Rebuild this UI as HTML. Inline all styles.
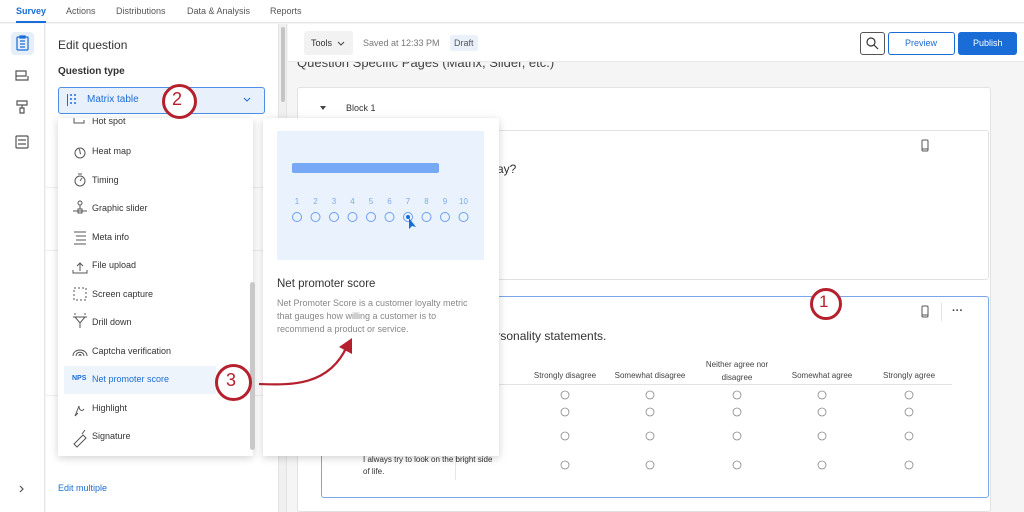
<!DOCTYPE html>
<html><head><meta charset="utf-8"><style>
*{margin:0;padding:0;box-sizing:border-box}
body{width:1024px;height:512px;overflow:hidden;background:#f5f5f5;font-family:"Liberation Sans",sans-serif;position:relative;color:#333}
.a{position:absolute}
.t{position:absolute;white-space:nowrap}
</style></head><body>
<div class="a" style="left:0;top:0;width:1024px;height:23px;background:#fff;border-bottom:1px solid #e6e6e6"></div>
<div class="t" style="left:16px;top:6px;font-size:9px;color:#1a6dd6;font-weight:bold">Survey</div>
<div class="a" style="left:16px;top:21px;width:30px;height:2px;background:#1a6dd6"></div>
<div class="t" style="left:66px;top:6px;font-size:9px;color:#555">Actions</div>
<div class="t" style="left:116px;top:6px;font-size:9px;color:#555">Distributions</div>
<div class="t" style="left:187px;top:6px;font-size:9px;color:#555">Data &amp; Analysis</div>
<div class="t" style="left:270px;top:6px;font-size:9px;color:#555">Reports</div>
<div class="a" style="left:0;top:24px;width:45px;height:488px;background:#fff;border-right:1px solid #e6e6e6"></div>
<div class="a" style="left:11px;top:32px;width:23px;height:23px;background:#e6eef9;border-radius:4px"></div>
<svg class="a" style="left:0;top:24px" width="45" height="488" fill="none" stroke="#555" stroke-width="1.2">
<rect x="17" y="13" width="11" height="13" rx="1" stroke="#1a6dd6"/><path d="M20 12h5v2h-5z M20 17h5 M20 20h5 M20 23h5" stroke="#1a6dd6"/>
<path d="M16 47h10v5h-10z M16 52v4h12v-4"/>
<path d="M17 77h10v4h-10z M22 81v3 M20 84h4v5h-4z"/>
<rect x="16" y="112" width="12" height="12" rx="1"/><path d="M18 116h8 M18 120h8"/>
<path d="M20 462l3 3-3 3"/>
</svg>
<div class="a" style="left:46px;top:24px;width:232px;height:488px;background:#fff"></div>
<div class="a" style="left:278px;top:24px;width:9px;height:488px;background:#f0f0f0;border-left:1px solid #e3e3e3;border-right:1px solid #e3e3e3"></div>
<div class="a" style="left:281px;top:27px;width:4px;height:75px;background:#c4c4c4;border-radius:2px"></div>
<div class="t" style="left:58px;top:38px;font-size:12px;color:#333">Edit question</div>
<div class="t" style="left:58px;top:66px;font-size:10px;font-weight:bold;color:#333">Question type</div>
<div class="a" style="left:58px;top:87px;width:207px;height:27px;background:#e8f0fb;border:1px solid #4d8fe6;border-radius:3px"></div>
<svg class="a" style="left:66px;top:93px" width="14" height="14" fill="#1a6dd6"><rect x="1" y="1" width="1" height="12"/><circle cx="5" cy="2" r="1"/><circle cx="5" cy="6" r="1"/><circle cx="5" cy="10" r="1"/><circle cx="9" cy="2" r="1"/><circle cx="9" cy="6" r="1"/><circle cx="9" cy="10" r="1"/></svg>
<div class="t" style="left:87px;top:94px;font-size:10px;color:#1a6dd6">Matrix table</div>
<svg class="a" style="left:243px;top:97px" width="8" height="6" fill="none" stroke="#1a6dd6"><path d="M1 1l3 3 3-3"/></svg>
<div class="a" style="left:46px;top:187px;width:232px;height:1px;background:#eee"></div>
<div class="a" style="left:46px;top:250px;width:232px;height:1px;background:#eee"></div>
<div class="a" style="left:46px;top:395px;width:232px;height:1px;background:#eee"></div>
<div class="t" style="left:58px;top:483px;font-size:9px;color:#1a6dd6">Edit multiple</div>
<div class="t" style="left:297px;top:55px;font-size:13px;color:#444">Question Specific Pages (Matrix, Slider, etc.)</div>
<div class="a" style="left:288px;top:24px;width:736px;height:38px;background:#fff;border-bottom:1px solid #e8e8e8"></div>
<div class="a" style="left:304px;top:31px;width:49px;height:24px;background:#f2f2f2;border-radius:3px"></div>
<div class="t" style="left:311px;top:38px;font-size:9px;color:#333">Tools</div>
<svg class="a" style="left:337px;top:41px" width="8" height="6" fill="none" stroke="#444"><path d="M1 1l3 3 3-3"/></svg>
<div class="t" style="left:363px;top:38px;font-size:9px;color:#777">Saved at 12:33 PM</div>
<div class="a" style="left:450px;top:35px;width:28px;height:16px;background:#eaf1fb;border-radius:2px"></div>
<div class="t" style="left:454px;top:38px;font-size:9px;color:#555">Draft</div>
<div class="a" style="left:860px;top:32px;width:25px;height:23px;border:1px solid #555;border-radius:3px;background:#fff"></div>
<svg class="a" style="left:865px;top:36px" width="15" height="15" fill="none" stroke="#333" stroke-width="1.2"><circle cx="6" cy="6" r="4"/><path d="M9 9l4 4"/></svg>
<div class="a" style="left:888px;top:32px;width:67px;height:23px;border:1px solid #1a6dd6;border-radius:3px;background:#fff"></div>
<div class="t" style="left:905px;top:38px;font-size:9px;color:#1a6dd6">Preview</div>
<div class="a" style="left:958px;top:32px;width:59px;height:23px;background:#1a6dd6;border-radius:3px"></div>
<div class="t" style="left:973px;top:38px;font-size:9px;color:#fff">Publish</div>
<div class="a" style="left:297px;top:87px;width:694px;height:425px;background:#fff;border:1px solid #e2e2e2;border-radius:3px"></div>
<svg class="a" style="left:320px;top:106px" width="8" height="6" fill="#444"><path d="M0 0h6l-3 4z"/></svg>
<div class="t" style="left:346px;top:103px;font-size:9px;color:#333">Block 1</div>
<div class="a" style="left:321px;top:130px;width:668px;height:150px;background:#fff;border:1px solid #e2e2e2;border-radius:3px"></div>
<div class="t" style="left:487px;top:162px;font-size:12px;color:#333">may?</div>
<svg class="a" style="left:919px;top:139px" width="12" height="16" fill="none" stroke="#555"><rect x="3" y="1" width="6" height="11" rx="1"/><path d="M3 10h6"/></svg>
<div class="a" style="left:321px;top:296px;width:668px;height:202px;background:#fff;border:1px solid #7aa7e8;border-radius:3px"></div>
<svg class="a" style="left:919px;top:305px" width="12" height="16" fill="none" stroke="#555"><rect x="3" y="1" width="6" height="11" rx="1"/><path d="M3 10h6"/></svg>
<div class="a" style="left:941px;top:303px;width:1px;height:18px;background:#e3e3e3"></div>
<div class="t" style="left:952px;top:305px;font-size:11px;color:#444;font-weight:bold">···</div>
<div class="t" style="left:483px;top:329px;font-size:12px;color:#333">personality statements.</div>
<div class="a" style="left:455px;top:355px;width:1px;height:125px;background:#e6e6e6"></div>
<div class="a" style="left:455px;top:384px;width:497px;height:1px;background:#e3e3e3"></div>
<div class="t" style="left:565px;top:371px;font-size:8px;color:#444;transform:translateX(-50%)">Strongly disagree</div>
<div class="t" style="left:650px;top:371px;font-size:8px;color:#444;transform:translateX(-50%)">Somewhat disagree</div>
<div class="t" style="left:737px;top:358px;font-size:8px;color:#444;transform:translateX(-50%);text-align:center;line-height:13px">Neither agree nor<br>disagree</div>
<div class="t" style="left:822px;top:371px;font-size:8px;color:#444;transform:translateX(-50%)">Somewhat agree</div>
<div class="t" style="left:909px;top:371px;font-size:8px;color:#444;transform:translateX(-50%)">Strongly agree</div>
<svg class="a" style="left:455px;top:385px" width="500" height="95" fill="none" stroke="#888" stroke-width="0.8">
<g id="r"><circle cx="110" cy="10" r="4"/><circle cx="195" cy="10" r="4"/><circle cx="282" cy="10" r="4"/><circle cx="367" cy="10" r="4"/><circle cx="454" cy="10" r="4"/></g>
<use href="#r" y="17"/><use href="#r" y="41"/><use href="#r" y="70"/>
</svg>
<div class="t" style="left:363px;top:454px;font-size:8px;color:#333;line-height:12px">I always try to look on the bright side<br>of life.</div>
<div class="a" style="left:810px;top:288px;width:32px;height:32px;border:3px solid #b5202e;border-radius:50%;background:#fff"></div>
<div class="t" style="left:819px;top:292px;font-size:17px;color:#b5202e">1</div>
<div class="a" style="left:58px;top:118px;width:195px;height:338px;background:#fff;box-shadow:0 2px 8px rgba(0,0,0,.18)"></div>
<div class="a" style="left:64px;top:366px;width:152px;height:28px;background:#eef4fc;border-radius:2px"></div>
<div class="a" style="left:250px;top:282px;width:5px;height:168px;background:#c8c8c8;border-radius:3px"></div>
<div class="a" style="left:58px;top:118px;width:195px;height:12px;overflow:hidden"><div class="t" style="left:34px;top:-2px;font-size:9px;color:#333">Hot spot</div></div>
<svg class="a" style="left:70px;top:118px" width="20" height="330" fill="none" stroke="#555" stroke-width="1">
<path d="M4 0v5h10v-3"/>
<circle cx="10" cy="35" r="5"/><path d="M9 31c2 2 0 4 2 5"/>
<circle cx="10" cy="63" r="5"/><path d="M8 56h4 M10 63l2-3"/>
<circle cx="10" cy="85" r="2"/><path d="M10 87v4 M3 93h14"/><rect x="8" y="91" width="4" height="4"/>
<path d="M4 114h12 M6 118h10 M6 122h10 M4 126h12"/>
<path d="M10 153v-8 M7 148l3-3 3 3 M3 152v3h14v-3"/>
<rect x="4" y="170" width="12" height="12" stroke-dasharray="2 2"/>
<path d="M3 199h14 M5 199l5 6 5-6 M10 205v5 M5 197v-2 M15 197v-2"/>
<path d="M3 238c0-8 14-8 14 0 M6 238c0-5 8-5 8 0 M9 238c0-2 2-2 2 0"/>
<path d="M5 298l4-10 M9 288c0 4 3 6 5 3 M5 298l3-3"/>
<path d="M4 326l4-4 5-5 3 3-5 5-4 4z M12 316l3-4"/>
</svg>
<div class="t" style="left:92px;top:146px;font-size:9px;color:#333">Heat map</div>
<div class="t" style="left:92px;top:175px;font-size:9px;color:#333">Timing</div>
<div class="t" style="left:92px;top:203px;font-size:9px;color:#333">Graphic slider</div>
<div class="t" style="left:92px;top:232px;font-size:9px;color:#333">Meta info</div>
<div class="t" style="left:92px;top:260px;font-size:9px;color:#333">File upload</div>
<div class="t" style="left:92px;top:289px;font-size:9px;color:#333">Screen capture</div>
<div class="t" style="left:92px;top:317px;font-size:9px;color:#333">Drill down</div>
<div class="t" style="left:92px;top:346px;font-size:9px;color:#333">Captcha verification</div>
<div class="t" style="left:72px;top:375px;font-size:7px;color:#1a6dd6;font-weight:bold">NPS</div>
<div class="t" style="left:92px;top:374px;font-size:9px;color:#1a6dd6">Net promoter score</div>
<div class="t" style="left:92px;top:403px;font-size:9px;color:#333">Highlight</div>
<div class="t" style="left:92px;top:431px;font-size:9px;color:#333">Signature</div>
<div class="a" style="left:263px;top:118px;width:236px;height:338px;background:#fff;box-shadow:0 2px 8px rgba(0,0,0,.18)"></div>
<div class="a" style="left:277px;top:131px;width:207px;height:129px;background:#eaf3fd"></div>
<div class="a" style="left:292px;top:163px;width:147px;height:10px;background:#75a8f5;border-radius:2px"></div>
<svg class="a" style="left:288px;top:194px" width="190" height="40">
<g font-family="Liberation Sans" font-size="8" fill="#7ea8ea" text-anchor="middle">
<text x="9" y="10">1</text><text x="27.5" y="10">2</text><text x="46" y="10">3</text><text x="64.5" y="10">4</text><text x="83" y="10">5</text><text x="101.5" y="10">6</text><text x="120" y="10">7</text><text x="138.5" y="10">8</text><text x="157" y="10">9</text><text x="175.5" y="10">10</text></g>
<g fill="none" stroke="#6a9ef0" stroke-width="1"><circle cx="9" cy="23" r="4.5"/><circle cx="27.5" cy="23" r="4.5"/><circle cx="46" cy="23" r="4.5"/><circle cx="64.5" cy="23" r="4.5"/><circle cx="83" cy="23" r="4.5"/><circle cx="101.5" cy="23" r="4.5"/><circle cx="120" cy="23" r="4.5"/><circle cx="138.5" cy="23" r="4.5"/><circle cx="157" cy="23" r="4.5"/><circle cx="175.5" cy="23" r="4.5"/></g>
<circle cx="120" cy="23" r="2" fill="#1a6dd6"/><path d="M121 24l0 11 3-3 4 1z" fill="#1a6dd6"/>
</svg>
<div class="t" style="left:277px;top:278px;font-size:11.5px;color:#333">Net promoter score</div>
<div class="t" style="left:277px;top:297px;font-size:9px;color:#888;line-height:13px">Net Promoter Score is a customer loyalty metric<br>that gauges how willing a customer is to<br>recommend a product or service.</div>
<div class="a" style="left:162px;top:84px;width:35px;height:35px;border:3px solid #b5202e;border-radius:50%;background:#fff"></div>
<div class="t" style="left:172px;top:89px;font-size:18px;color:#b5202e">2</div>
<div class="a" style="left:215px;top:364px;width:37px;height:37px;border:3px solid #b5202e;border-radius:50%;background:#fff"></div>
<div class="t" style="left:226px;top:370px;font-size:18px;color:#b5202e">3</div>
<svg class="a" style="left:255px;top:335px" width="110" height="60" fill="none"><path d="M4 49c30 1 70 3 88-38" stroke="#b5202e" stroke-width="2.2"/><path d="M97 3l-13 9 13 7z" fill="#b5202e"/></svg>
</body></html>
